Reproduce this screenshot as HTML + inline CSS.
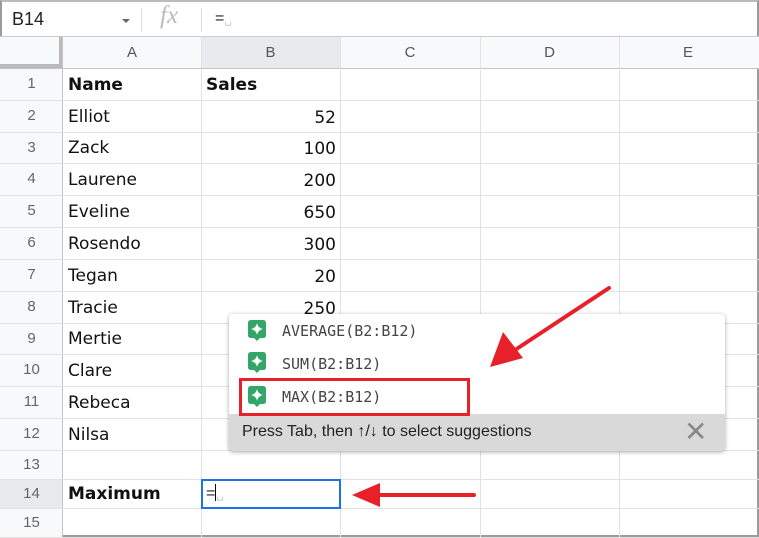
<!DOCTYPE html>
<html><head><style>
*{margin:0;padding:0;box-sizing:border-box}
body{width:759px;height:537px;overflow:hidden;background:#fff;position:relative;font-family:"Liberation Sans",sans-serif}
.a{position:absolute}
.hl{position:absolute;height:1px;background:#e2e2e2}
.vl{position:absolute;width:1px;background:#e2e2e2}
.rh{position:absolute;left:0;width:63px;text-align:center;color:#666;font-size:15px}
.ch{position:absolute;top:37px;height:31px;line-height:31px;text-align:center;color:#555;font-size:15px}
.t{position:absolute;font-family:"DejaVu Sans",sans-serif;font-size:17px;color:#111}
.n{position:absolute;left:201px;width:135px;text-align:right;font-family:"DejaVu Sans",sans-serif;font-size:17px;color:#111}
.it{position:absolute;left:282px;font-family:"DejaVu Sans Mono","Liberation Mono",monospace;font-size:15px;color:#444}
.ic{position:absolute;left:248px}
</style></head><body>
<div class="a" style="left:0;top:0;width:759px;height:537px;border:2px solid #9a9a9a;border-top:2px solid #bbb"></div>
<div class="a" style="left:12px;top:9px;font-size:18px;color:#222">B14</div>
<div class="a" style="left:122px;top:19px;width:0;height:0;border-left:4px solid transparent;border-right:4px solid transparent;border-top:4px solid #666"></div>
<div class="a" style="left:141px;top:8px;width:1px;height:24px;background:#ddd"></div>
<div class="a" style="left:160px;top:2px;font-family:'Liberation Serif',serif;font-style:italic;font-size:25px;color:#bbb">fx</div>
<div class="a" style="left:201px;top:8px;width:1px;height:24px;background:#ddd"></div>
<div class="a" style="left:215px;top:10px;font-size:16px;color:#222">=<span style="color:#ccc;font-size:12px">␣</span></div>
<div class="a" style="left:0;top:36px;width:759px;height:1px;background:#ccc"></div>
<div class="a" style="left:0;top:37px;width:759px;height:31px;background:#f8f9fa"></div>
<div class="a" style="left:201px;top:37px;width:139px;height:31px;background:#e8eaed"></div>
<div class="a" style="left:0;top:37px;width:63px;height:31px;background:#f8f9fa;border-right:4px solid #bbb;border-bottom:4px solid #bbb"></div>
<div class="a" style="left:0;top:68px;width:63px;height:469px;background:#f8f9fa"></div>
<div class="a" style="left:0;top:479px;width:63px;height:29px;background:#e8eaed"></div>
<div class="ch" style="left:63px;width:138px">A</div>
<div class="ch" style="left:201px;width:139px">B</div>
<div class="ch" style="left:340px;width:140px">C</div>
<div class="ch" style="left:480px;width:139px">D</div>
<div class="ch" style="left:619px;width:138px">E</div>
<div class="a" style="left:0;top:68px;width:759px;height:1px;background:#c4c4c4"></div>
<div class="a" style="left:62px;top:37px;width:1px;height:500px;background:#c4c4c4"></div>
<div class="vl" style="left:201px;top:37px;height:500px"></div>
<div class="vl" style="left:340px;top:37px;height:500px"></div>
<div class="vl" style="left:480px;top:37px;height:500px"></div>
<div class="vl" style="left:619px;top:37px;height:500px"></div>
<div id="rows"></div>
<script>
var tops=[68];for(var i=1;i<=12;i++)tops.push(Math.round(68+31.83*i));tops.push(479,508,537);
var names=["Name","Elliot","Zack","Laurene","Eveline","Rosendo","Tegan","Tracie","Mertie","Clare","Rebeca","Nilsa","","Maximum",""];
var nums=["Sales","52","100","200","650","300","20","250","","","","","","",""];
var h="";
for(var r=0;r<15;r++){var t=tops[r],b=tops[r+1],hh=b-t;
h+='<div class="hl" style="left:0;width:759px;top:'+b+'px"></div>';
h+='<div class="rh" style="top:'+t+'px;height:'+hh+'px;line-height:'+hh+'px">'+(r+1)+'</div>';
var bold=(r==0||r==13)?'font-weight:bold;':'';
if(names[r])h+='<div class="t" style="left:68px;top:'+t+'px;line-height:'+(hh+2)+'px;'+bold+'">'+names[r]+'</div>';
if(r==0)h+='<div class="t" style="left:206px;top:'+t+'px;line-height:'+(hh+2)+'px;font-weight:bold">Sales</div>';
else if(nums[r])h+='<div class="n" style="top:'+t+'px;line-height:'+(hh+4)+'px">'+nums[r]+'</div>';}
document.getElementById('rows').outerHTML=h;
</script>
<div class="a" style="left:201px;top:479px;width:140px;height:30px;border:2px solid #1a73e8;background:#fff"></div>
<div class="a" style="left:206px;top:484px;font-size:16px;color:#222">=<span style="display:inline-block;width:1px;height:17px;background:#000;vertical-align:-3px"></span><span style="color:#ccc;font-size:12px">␣</span></div>
<div class="a" style="left:229px;top:314px;width:496px;height:137px;background:#fff;border-radius:4px;box-shadow:0 1px 4px rgba(0,0,0,.35);overflow:hidden">
<div class="a" style="left:0;top:100px;width:496px;height:37px;background:#d9d9d9"></div>
<div class="a" style="left:13px;top:109px;font-size:16px;color:#222">Press Tab, then ↑/↓ to select suggestions</div>
<div class="a" style="left:455px;top:101px;font-size:28px;color:#888">✕</div>
</div>
<svg class="ic" style="top:320px" width="18" height="22" viewBox="0 0 18 22"><path d="M3 0H15Q18 0 18 3V15Q18 18 15 18H12L9 21L6 18H3Q0 18 0 15V3Q0 0 3 0Z" fill="#34a66a"/><path d="M9 3Q10 8 15 9Q10 10 9 15Q8 10 3 9Q8 8 9 3Z" fill="#fff"/></svg>
<div class="it" style="top:322px">AVERAGE(B2:B12)</div>
<svg class="ic" style="top:352px" width="18" height="22" viewBox="0 0 18 22"><path d="M3 0H15Q18 0 18 3V15Q18 18 15 18H12L9 21L6 18H3Q0 18 0 15V3Q0 0 3 0Z" fill="#34a66a"/><path d="M9 3Q10 8 15 9Q10 10 9 15Q8 10 3 9Q8 8 9 3Z" fill="#fff"/></svg>
<div class="it" style="top:355px">SUM(B2:B12)</div>
<svg class="ic" style="top:386px" width="18" height="22" viewBox="0 0 18 22"><path d="M3 0H15Q18 0 18 3V15Q18 18 15 18H12L9 21L6 18H3Q0 18 0 15V3Q0 0 3 0Z" fill="#34a66a"/><path d="M9 3Q10 8 15 9Q10 10 9 15Q8 10 3 9Q8 8 9 3Z" fill="#fff"/></svg>
<div class="it" style="top:388px">MAX(B2:B12)</div>
<div class="a" style="left:239px;top:378px;width:231px;height:38px;border:3px solid #e8202a"></div>
<svg class="a" style="left:0;top:0" width="759" height="537">
<line x1="609" y1="288" x2="515" y2="350" stroke="#e8202a" stroke-width="4" stroke-linecap="round"/>
<polygon points="490,367 503,332 523,358" fill="#e8202a"/>
<line x1="474" y1="495" x2="380" y2="495" stroke="#e8202a" stroke-width="4" stroke-linecap="round"/>
<polygon points="352,495 380,483 380,507" fill="#e8202a"/>
</svg>
</body></html>
